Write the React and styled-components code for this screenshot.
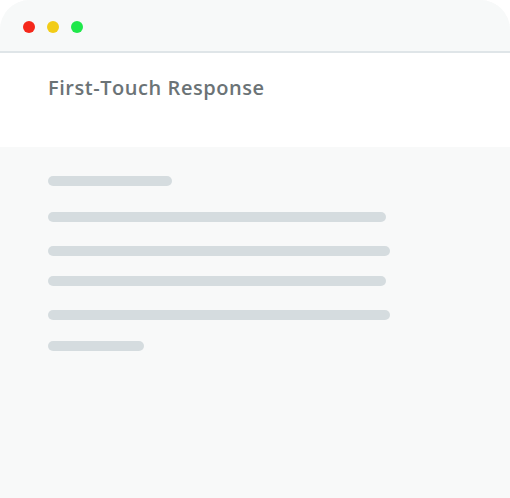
import React from 'react';
import styled, { createGlobalStyle } from 'styled-components';

const GlobalStyle = createGlobalStyle`
  html, body {
    margin: 0;
    padding: 0;
    background: #ffffff;
  }
`;

const Window = styled.div`
  width: 510px;
  height: 498px;
  border-radius: 30px 30px 0 0;
  overflow: hidden;
  background: #f8f9f9;
  display: flex;
  flex-direction: column;
`;

const TitleBar = styled.div`
  height: 53px;
  box-sizing: border-box;
  background: #f7f9f9;
  border-bottom: 2px solid #dfe5e8;
  display: flex;
  align-items: center;
  gap: 12px;
  padding: 3px 0 0 23px;
`;

const Dot = styled.span`
  width: 12px;
  height: 12px;
  border-radius: 50%;
  background: ${p => p.color};
`;

const Header = styled.div`
  height: 94px;
  background: #ffffff;
  padding: 22px 48px 0;
  box-sizing: border-box;
`;

const Title = styled.h1`
  margin: 0;
  font-family: 'Open Sans', 'Liberation Sans', sans-serif;
  font-weight: 600;
  font-size: 20px;
  line-height: 26px;
  letter-spacing: 0.55px;
  color: #6b7376;
`;

const Body = styled.div`
  flex: 1;
  padding: 29px 48px 0;
  display: flex;
  flex-direction: column;
`;

const Bar = styled.div`
  height: 10px;
  border-radius: 5px;
  background: #d5dcdf;
  width: ${p => p.w}px;
  margin-top: ${p => p.top || 0}px;
`;

const lines = [
  { w: 124, top: 0 },
  { w: 338, top: 26 },
  { w: 342, top: 24 },
  { w: 338, top: 20 },
  { w: 342, top: 24 },
  { w: 96, top: 21 },
];

export default function App() {
  return (
    <>
      <GlobalStyle />
      <Window>
        <TitleBar>
          <Dot color="#f5281b" />
          <Dot color="#f2cc17" />
          <Dot color="#1fe84b" />
        </TitleBar>
        <Header>
          <Title>First-Touch Response</Title>
        </Header>
        <Body>
          {lines.map((l, i) => (
            <Bar key={i} w={l.w} top={l.top} />
          ))}
        </Body>
      </Window>
    </>
  );
}
